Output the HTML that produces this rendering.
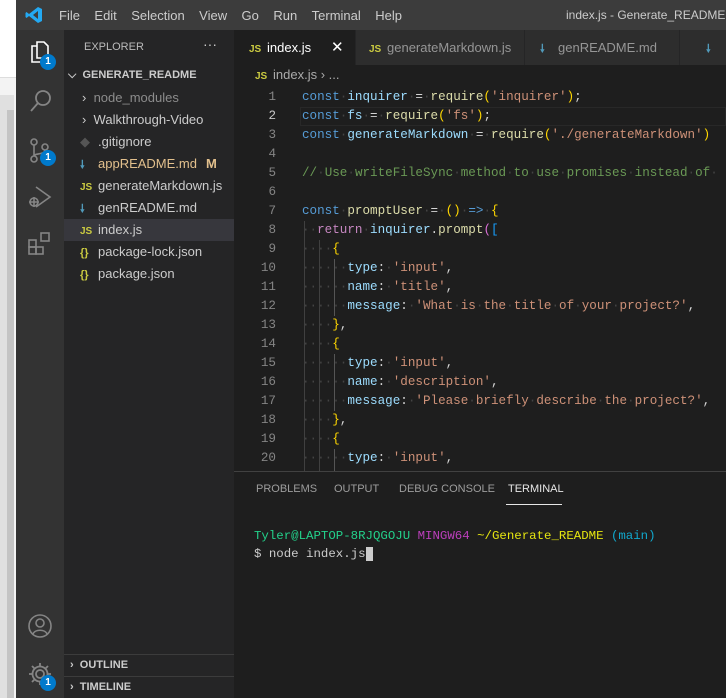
<!DOCTYPE html>
<html><head><meta charset="utf-8"><style>
*{margin:0;padding:0;box-sizing:border-box}
body{width:726px;height:698px;overflow:hidden;background:#1e1e1e;position:relative;font-family:"Liberation Sans",sans-serif;font-size:13px;color:#ccc}
.a{position:absolute}
.mono{font-family:"Liberation Mono",monospace;font-size:12.6px;white-space:pre}
.d{color:#444}
.k{color:#569cd6}.v{color:#9cdcfe}.f{color:#dcdcaa}.s{color:#ce9178}.c{color:#6a9955}.r{color:#c586c0}.y{color:#ffd700}.p{color:#da70d6}.b{color:#179fff}.w{color:#d4d4d4}
.row{position:absolute;left:64px;width:170px;height:22px;line-height:22px;font-size:13px;color:#ccc}
.js{color:#cbcb41;font-weight:bold;font-size:10px;display:inline-block;width:18px}
.md{color:#519aba;display:inline-block;width:18px;font-size:11px;font-weight:bold}
.gd{position:absolute;width:1px;background:#404040}
.badge{position:absolute;width:16px;height:16px;border-radius:50%;background:#007acc;color:#fff;font-size:10px;font-weight:bold;text-align:center;line-height:16px}
</style></head><body>
<!-- left foreign strip -->
<div class="a" style="left:0;top:0;width:16px;height:698px;background:#f3f3f3"></div>
<div class="a" style="left:0;top:0;width:16px;height:30px;background:#fff"></div>
<div class="a" style="left:0;top:30px;width:17px;height:48px;background:#fff;border-right:1px solid #ddd;border-bottom:1px solid #ddd"></div>
<div class="a" style="left:0;top:95px;width:14px;height:603px;background:#e0e0e0"></div>
<div class="a" style="left:7px;top:110px;width:7px;height:588px;background:#c4c4c4"></div>
<!-- title bar -->
<div class="a" style="left:16px;top:0;width:710px;height:30px;background:#3c3c3c"></div>
<svg class="a" style="left:25px;top:6px" width="18" height="18" viewBox="0 0 18 18"><path d="M13 1 L17 3 V15 L13 17 L4 10 L1.5 12 L0.5 11 V7 L1.5 6 L4 8 Z M13 5 L8 9 L13 13 Z" fill="#23a9f2"/></svg>
<div class="a" style="left:59px;top:8px;font-size:13px;color:#ccc;word-spacing:0">File&nbsp;&nbsp;&nbsp;&nbsp;Edit&nbsp;&nbsp;&nbsp;&nbsp;Selection&nbsp;&nbsp;&nbsp;&nbsp;View&nbsp;&nbsp;&nbsp;&nbsp;Go&nbsp;&nbsp;&nbsp;&nbsp;Run&nbsp;&nbsp;&nbsp;&nbsp;Terminal&nbsp;&nbsp;&nbsp;&nbsp;Help</div>
<div class="a" style="left:566px;top:8px;font-size:12px;color:#ccc;white-space:nowrap">index.js - Generate_README -</div>
<!-- activity bar -->
<div class="a" style="left:16px;top:30px;width:48px;height:668px;background:#333"></div>
<svg class="a" style="left:28px;top:40px" width="24" height="24" viewBox="0 0 24 24" fill="none" stroke="#fff" stroke-width="1.6"><path d="M9 6H4v16h11v-4"/><path d="M9 2h7l4 4v12H9z"/></svg>
<div class="badge" style="left:40px;top:54px">1</div>
<svg class="a" style="left:28px;top:88px" width="26" height="26" viewBox="0 0 26 26" fill="none" stroke="#858585" stroke-width="1.8"><circle cx="15" cy="10" r="7"/><path d="M10 15L3 23"/></svg>
<svg class="a" style="left:28px;top:138px" width="24" height="26" viewBox="0 0 24 26" fill="none" stroke="#858585" stroke-width="1.6"><circle cx="6" cy="4" r="3"/><circle cx="6" cy="21" r="3"/><circle cx="17" cy="9" r="3"/><path d="M6 7v11M17 12c0 5-11 3-11 6"/></svg>
<div class="badge" style="left:40px;top:150px">1</div>
<svg class="a" style="left:27px;top:184px" width="26" height="26" viewBox="0 0 26 26" fill="none" stroke="#858585" stroke-width="1.6"><path d="M9 3l14 10-14 10"/><circle cx="7" cy="18" r="4"/><path d="M2 18h10M7 13v10"/></svg>
<svg class="a" style="left:28px;top:232px" width="24" height="24" viewBox="0 0 24 24" fill="none" stroke="#858585" stroke-width="1.6"><rect x="1" y="8" width="7" height="7"/><rect x="8" y="15" width="7" height="7"/><rect x="1" y="15" width="7" height="7"/><rect x="13" y="1" width="8" height="8"/></svg>
<svg class="a" style="left:28px;top:614px" width="24" height="24" viewBox="0 0 24 24" fill="none" stroke="#858585" stroke-width="1.6"><circle cx="12" cy="12" r="11"/><circle cx="12" cy="9" r="4"/><path d="M5 20c2-5 12-5 14 0"/></svg>
<svg class="a" style="left:28px;top:662px" width="24" height="24" viewBox="0 0 24 24" fill="none" stroke="#858585" stroke-width="1.8"><circle cx="12" cy="12" r="4"/><path d="M12 1v4M12 19v4M1 12h4M19 12h4M4 4l3 3M17 17l3 3M4 20l3-3M17 7l3-3"/><circle cx="12" cy="12" r="7.5"/></svg>
<div class="badge" style="left:40px;top:675px">1</div>
<!-- sidebar -->
<div class="a" style="left:64px;top:30px;width:170px;height:668px;background:#252526"></div>
<div class="a" style="left:84px;top:41px;font-size:11px;color:#bbb">EXPLORER</div>
<div class="a" style="left:203px;top:36px;font-size:14px;color:#ccc">···</div>
<div class="a" style="left:68px;top:69px;font-size:11px;font-weight:bold;color:#ccc">⌵&nbsp;&nbsp;GENERATE_README</div>
<div class="row" style="top:87px;padding-left:18px;color:#8c8c8c"><span style="color:#ccc">›</span>&nbsp;&nbsp;node_modules</div>
<div class="row" style="top:109px;padding-left:18px">›&nbsp;&nbsp;Walkthrough-Video</div>
<div class="row" style="top:131px;padding-left:16px"><span style="color:#555;display:inline-block;width:18px">◆</span>.gitignore</div>
<div class="row" style="top:153px;padding-left:16px;color:#e2c08d"><span class="md">🠗</span>appREADME.md<span style="position:absolute;left:142px;font-weight:bold">M</span></div>
<div class="row" style="top:175px;padding-left:16px"><span class="js">JS</span>generateMarkdown.js</div>
<div class="row" style="top:197px;padding-left:16px"><span class="md">🠗</span>genREADME.md</div>
<div class="row" style="top:219px;padding-left:16px;background:#37373d"><span class="js">JS</span>index.js</div>
<div class="row" style="top:241px;padding-left:16px"><span style="color:#cbcb41;font-weight:bold;font-size:11px;display:inline-block;width:18px">{}</span>package-lock.json</div>
<div class="row" style="top:263px;padding-left:16px"><span style="color:#cbcb41;font-weight:bold;font-size:11px;display:inline-block;width:18px">{}</span>package.json</div>
<div class="a" style="left:64px;top:654px;width:170px;height:1px;background:#3c3c3c"></div>
<div class="a" style="left:64px;top:676px;width:170px;height:1px;background:#3c3c3c"></div>
<div class="a" style="left:70px;top:659px;font-size:11px;font-weight:bold;color:#ccc">›&nbsp;&nbsp;OUTLINE</div>
<div class="a" style="left:70px;top:681px;font-size:11px;font-weight:bold;color:#ccc">›&nbsp;&nbsp;TIMELINE</div>
<!-- tabs -->
<div class="a" style="left:234px;top:30px;width:492px;height:35px;background:#252526"></div>
<div class="a" style="left:234px;top:30px;width:121px;height:35px;background:#1e1e1e;line-height:35px;padding-left:15px;color:#fff"><span class="js">JS</span>index.js<span style="position:absolute;left:97px;font-size:15px">✕</span></div>
<div class="a" style="left:356px;top:30px;width:168px;height:35px;background:#2d2d2d;line-height:35px;padding-left:13px;color:#969696"><span class="js">JS</span>generateMarkdown.js</div>
<div class="a" style="left:525px;top:30px;width:154px;height:35px;background:#2d2d2d;line-height:35px;padding-left:15px;color:#969696"><span class="md">🠗</span>genREADME.md</div>
<div class="a" style="left:680px;top:30px;width:46px;height:35px;background:#2d2d2d;line-height:35px;padding-left:26px;color:#969696"><span class="md">🠗</span></div>
<div class="a" style="left:255px;top:67px;color:#aaa;font-size:13px"><span class="js">JS</span>index.js › ...</div>
<!-- line numbers -->
<div class="a mono" style="left:248px;top:88px;width:28px;text-align:right;line-height:19px;color:#858585">1
<span style="color:#c6c6c6">2</span>
3
4
5
6
7
8
9
10
11
12
13
14
15
16
17
18
19
20</div>
<div class="a" style="left:300px;top:107px;width:426px;height:19px;border:1px solid #282828"></div>
<div class="gd" style="left:304px;top:221px;height:250px"></div>
<div class="gd" style="left:319px;top:240px;height:231px"></div>
<div class="gd" style="left:334px;top:259px;height:57px;background:#555"></div>
<div class="gd" style="left:334px;top:354px;height:57px;background:#555"></div>
<div class="gd" style="left:334px;top:449px;height:22px;background:#555"></div>
<div class="a mono" style="left:302px;top:88px;line-height:19px;width:424px;overflow:hidden"><span class="k">const</span><span class="d">·</span><span class="v">inquirer</span><span class="d">·</span><span class="w">=</span><span class="d">·</span><span class="f">require</span><span class="y">(</span><span class="s">'inquirer'</span><span class="y">)</span><span class="w">;</span>
<span class="k">const</span><span class="d">·</span><span class="v">fs</span><span class="d">·</span><span class="w">=</span><span class="d">·</span><span class="f">require</span><span class="y">(</span><span class="s">'fs'</span><span class="y">)</span><span class="w">;</span>
<span class="k">const</span><span class="d">·</span><span class="v">generateMarkdown</span><span class="d">·</span><span class="w">=</span><span class="d">·</span><span class="f">require</span><span class="y">(</span><span class="s">'./generateMarkdown'</span><span class="y">)</span>

<span class="c">//<span class="d">·</span>Use<span class="d">·</span>writeFileSync<span class="d">·</span>method<span class="d">·</span>to<span class="d">·</span>use<span class="d">·</span>promises<span class="d">·</span>instead<span class="d">·</span>of<span class="d">·</span></span>

<span class="k">const</span><span class="d">·</span><span class="f">promptUser</span><span class="d">·</span><span class="w">=</span><span class="d">·</span><span class="y">()</span><span class="d">·</span><span class="k">=&gt;</span><span class="d">·</span><span class="y">{</span>
<span class="d">··</span><span class="r">return</span><span class="d">·</span><span class="v">inquirer</span><span class="w">.</span><span class="f">prompt</span><span class="p">(</span><span class="b">[</span>
<span class="d">····</span><span class="y">{</span>
<span class="d">······</span><span class="v">type</span><span class="w">:</span><span class="d">·</span><span class="s">'input'</span><span class="w">,</span>
<span class="d">······</span><span class="v">name</span><span class="w">:</span><span class="d">·</span><span class="s">'title'</span><span class="w">,</span>
<span class="d">······</span><span class="v">message</span><span class="w">:</span><span class="d">·</span><span class="s">'What<span class="d">·</span>is<span class="d">·</span>the<span class="d">·</span>title<span class="d">·</span>of<span class="d">·</span>your<span class="d">·</span>project?'</span><span class="w">,</span>
<span class="d">····</span><span class="y">}</span><span class="w">,</span>
<span class="d">····</span><span class="y">{</span>
<span class="d">······</span><span class="v">type</span><span class="w">:</span><span class="d">·</span><span class="s">'input'</span><span class="w">,</span>
<span class="d">······</span><span class="v">name</span><span class="w">:</span><span class="d">·</span><span class="s">'description'</span><span class="w">,</span>
<span class="d">······</span><span class="v">message</span><span class="w">:</span><span class="d">·</span><span class="s">'Please<span class="d">·</span>briefly<span class="d">·</span>describe<span class="d">·</span>the<span class="d">·</span>project?'</span><span class="w">,</span>
<span class="d">····</span><span class="y">}</span><span class="w">,</span>
<span class="d">····</span><span class="y">{</span>
<span class="d">······</span><span class="v">type</span><span class="w">:</span><span class="d">·</span><span class="s">'input'</span><span class="w">,</span></div>
<!-- panel -->
<div class="a" style="left:234px;top:471px;width:492px;height:227px;background:#1e1e1e;border-top:1px solid #414141"></div>
<div class="a" style="left:256px;top:483px;font-size:11px;color:#9d9d9d;white-space:nowrap">PROBLEMS</div>
<div class="a" style="left:334px;top:483px;font-size:11px;color:#9d9d9d">OUTPUT</div>
<div class="a" style="left:399px;top:483px;font-size:11px;color:#9d9d9d;white-space:nowrap">DEBUG CONSOLE</div>
<div class="a" style="left:508px;top:483px;font-size:11px;color:#e7e7e7">TERMINAL</div>
<div class="a" style="left:506px;top:504px;width:56px;height:1px;background:#e7e7e7"></div>
<div class="a mono" style="left:254px;top:527px;line-height:18px;font-size:12.4px;color:#ccc"><span style="color:#23d18b">Tyler@LAPTOP-8RJQGOJU</span> <span style="color:#bc3fbc">MINGW64</span> <span style="color:#e5e510">~/Generate_README</span> <span style="color:#11a8cd">(main)</span>
$ node index.js<span style="background:#ccc">&nbsp;</span></div>
</body></html>
